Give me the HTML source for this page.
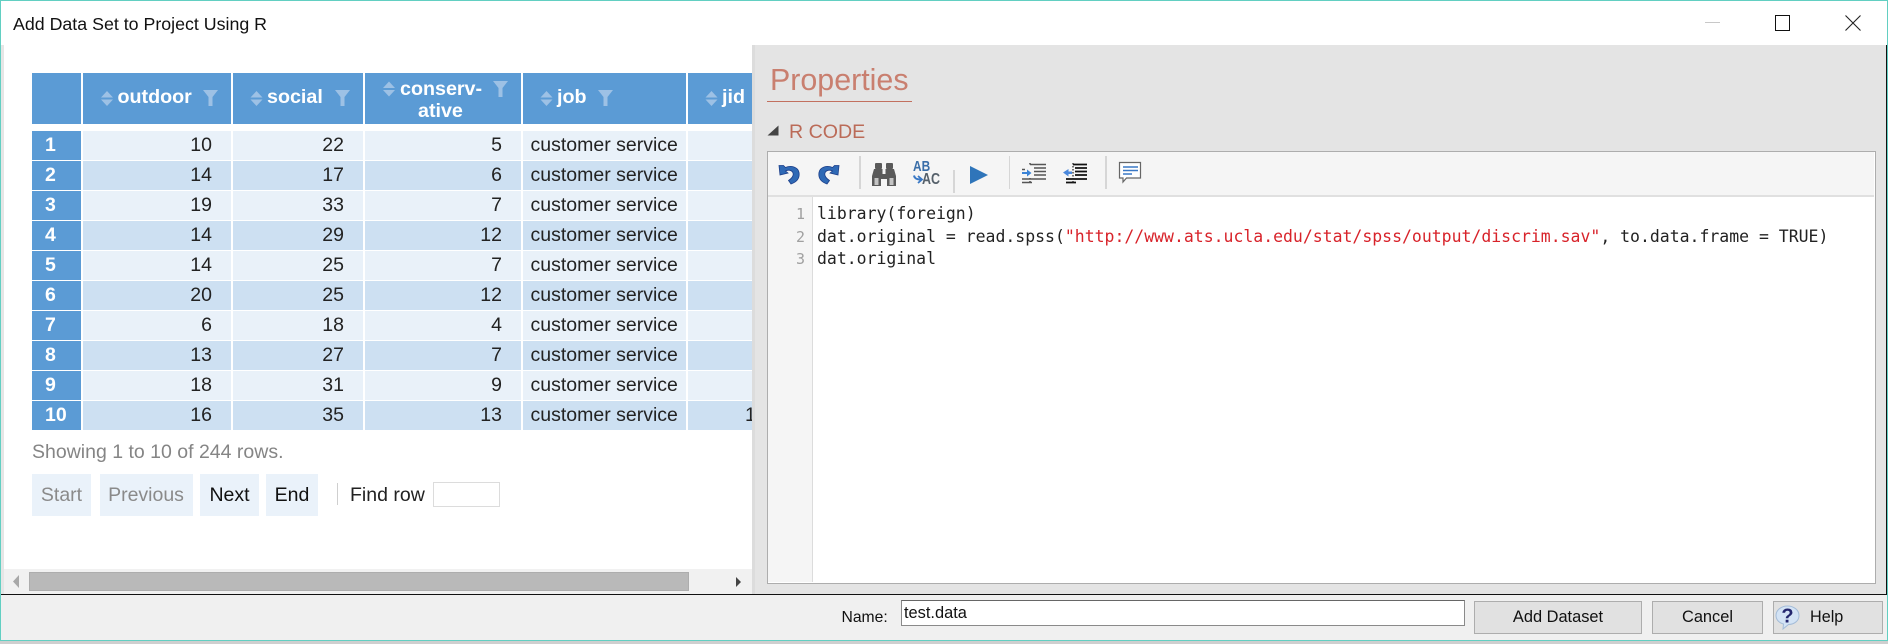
<!DOCTYPE html>
<html><head><meta charset="utf-8"><style>
html,body{margin:0;padding:0;width:1888px;height:644px;overflow:hidden;background:#fff}
body{position:relative;font-family:"Liberation Sans",sans-serif;color:#1a1a1a}
div,span,svg{position:absolute;white-space:nowrap}
.hb{background:#5b9bd5;top:73px;height:51px}
.ht{color:#fff;font-weight:bold;font-size:19.7px;line-height:24px;height:24px}
.c{height:28.5px}
.n{font-size:19.5px;line-height:29px;height:29px;color:#222}
.r{text-align:right}
.i{font-weight:bold;color:#fff;font-size:19.5px;line-height:29px;height:29px}
.btn{background:#eaf2fa;top:474px;height:42px;font-size:19.5px;line-height:42px;text-align:center;color:#111}
.g{color:#8a8a8a}
.code{font-family:"DejaVu Sans Mono","Liberation Mono",monospace;font-size:16.48px;line-height:22px;left:817px;color:#222}
.ln{font-family:"DejaVu Sans Mono","Liberation Mono",monospace;font-size:15px;line-height:22px;left:790px;width:15px;text-align:right;color:#a0a0a0}
.w{background:#e1e1e1;border:1.5px solid #adadad;box-sizing:border-box;top:601px;height:33px;text-align:center;font-size:16.4px;line-height:30px;color:#111}
.sep{background:#d6d6d6;width:1.5px}
</style></head><body>

<!-- bottom strip -->
<div style="left:0;top:641px;width:1888px;height:3px;background:#cfcfcf"></div>

<!-- window frame -->
<div style="left:0;top:0;width:1888px;height:1px;background:#62cfc2"></div>
<div style="left:0;top:0;width:1px;height:641px;background:#62cfc2"></div>
<div style="left:0;top:640px;width:1888px;height:1px;background:#62cfc2"></div>
<div style="left:1887px;top:0;width:1px;height:641px;background:#62cfc2"></div>

<!-- title bar -->
<div style="left:13px;top:12px;font-size:17.8px;line-height:24px;color:#111">Add Data Set to Project Using R</div>
<div style="left:1705px;top:22px;width:15px;height:1px;background:#c8c8c8"></div>
<div style="left:1775px;top:15px;width:12.5px;height:13.5px;border:1.3px solid #111"></div>
<svg style="left:1844px;top:14px" width="18" height="18" viewBox="0 0 18 18"><path d="M1.5 1.5L16.500 16.500M16.500 1.500L1.500 16.500" stroke="#222" stroke-width="1.100" fill="none"/></svg>

<!-- left stripe + panels -->
<div style="left:1px;top:45px;width:3px;height:549px;background:#e6e6e6"></div>
<div style="left:752px;top:45px;width:1134px;height:549px;background:#e4e4e4"></div>
<div style="left:752px;top:45px;width:3px;height:549px;background:#dcdcdc"></div>

<!-- table header -->
<div class="hb" style="left:32px;width:49px"></div>
<div class="hb" style="left:83px;width:148px"></div>
<div class="hb" style="left:233px;width:130px"></div>
<div class="hb" style="left:365px;width:156px"></div>
<div class="hb" style="left:523px;width:163px"></div>
<div class="hb" style="left:688px;width:64px"></div>

<svg style="left:32px;top:73px" width="720" height="51" viewBox="32 73 720 51">
<g fill="#9dc1e5">
<path d="M107 91l6 6.500h-12zM107 106l6-6.500h-12z"/>
<path d="M256.500 91l6 6.500h-12zM256.500 106l6-6.500h-12z"/>
<path d="M389 81.500l6 6.500h-12zM389 96.500l6-6.500h-12z"/>
<path d="M546.500 91l6 6.500h-12zM546.500 106l6-6.500h-12z"/>
<path d="M711.500 91l6 6.500h-12zM711.500 106l6-6.500h-12z"/>
<path d="M203 90h15l-5.500 7v9h-4v-9z"/>
<path d="M335 90h15l-5.500 7v9h-4v-9z"/>
<path d="M493 81h15l-5.500 7v9h-4v-9z"/>
<path d="M598 90h15l-5.500 7v9h-4v-9z"/>
</g></svg>
<div class="ht" style="left:117.500px;top:85px">outdoor</div>
<div class="ht" style="left:267px;top:85px">social</div>
<div class="ht" style="left:400px;top:77px">conserv-</div>
<div class="ht" style="left:418px;top:99px">ative</div>
<div class="ht" style="left:557px;top:85px">job</div>
<div class="ht" style="left:722px;top:85px">jid</div>

<!-- rows -->
<div class="c" style="left:32px;top:131px;width:49px;background:#5b9bd5"></div><div class="c" style="left:83px;top:131px;width:148px;background:#e9f1f9"></div><div class="c" style="left:233px;top:131px;width:130px;background:#e9f1f9"></div><div class="c" style="left:365px;top:131px;width:156px;background:#e9f1f9"></div><div class="c" style="left:523px;top:131px;width:163px;background:#e9f1f9"></div><div class="c" style="left:688px;top:131px;width:64px;background:#e9f1f9"></div>
<div class="i" style="left:45px;top:131px">1</div><div class="n r" style="left:100px;width:112px;top:131px">10</div><div class="n r" style="left:240px;width:104px;top:131px">22</div><div class="n r" style="left:400px;width:102px;top:131px">5</div><div class="n" style="left:530.500px;top:131px">customer service</div>

<div class="c" style="left:32px;top:161px;width:49px;background:#5b9bd5"></div><div class="c" style="left:83px;top:161px;width:148px;background:#cde0f2"></div><div class="c" style="left:233px;top:161px;width:130px;background:#cde0f2"></div><div class="c" style="left:365px;top:161px;width:156px;background:#cde0f2"></div><div class="c" style="left:523px;top:161px;width:163px;background:#cde0f2"></div><div class="c" style="left:688px;top:161px;width:64px;background:#cde0f2"></div>
<div class="i" style="left:45px;top:161px">2</div><div class="n r" style="left:100px;width:112px;top:161px">14</div><div class="n r" style="left:240px;width:104px;top:161px">17</div><div class="n r" style="left:400px;width:102px;top:161px">6</div><div class="n" style="left:530.500px;top:161px">customer service</div>

<div class="c" style="left:32px;top:191px;width:49px;background:#5b9bd5"></div><div class="c" style="left:83px;top:191px;width:148px;background:#e9f1f9"></div><div class="c" style="left:233px;top:191px;width:130px;background:#e9f1f9"></div><div class="c" style="left:365px;top:191px;width:156px;background:#e9f1f9"></div><div class="c" style="left:523px;top:191px;width:163px;background:#e9f1f9"></div><div class="c" style="left:688px;top:191px;width:64px;background:#e9f1f9"></div>
<div class="i" style="left:45px;top:191px">3</div><div class="n r" style="left:100px;width:112px;top:191px">19</div><div class="n r" style="left:240px;width:104px;top:191px">33</div><div class="n r" style="left:400px;width:102px;top:191px">7</div><div class="n" style="left:530.500px;top:191px">customer service</div>

<div class="c" style="left:32px;top:221px;width:49px;background:#5b9bd5"></div><div class="c" style="left:83px;top:221px;width:148px;background:#cde0f2"></div><div class="c" style="left:233px;top:221px;width:130px;background:#cde0f2"></div><div class="c" style="left:365px;top:221px;width:156px;background:#cde0f2"></div><div class="c" style="left:523px;top:221px;width:163px;background:#cde0f2"></div><div class="c" style="left:688px;top:221px;width:64px;background:#cde0f2"></div>
<div class="i" style="left:45px;top:221px">4</div><div class="n r" style="left:100px;width:112px;top:221px">14</div><div class="n r" style="left:240px;width:104px;top:221px">29</div><div class="n r" style="left:400px;width:102px;top:221px">12</div><div class="n" style="left:530.500px;top:221px">customer service</div>

<div class="c" style="left:32px;top:251px;width:49px;background:#5b9bd5"></div><div class="c" style="left:83px;top:251px;width:148px;background:#e9f1f9"></div><div class="c" style="left:233px;top:251px;width:130px;background:#e9f1f9"></div><div class="c" style="left:365px;top:251px;width:156px;background:#e9f1f9"></div><div class="c" style="left:523px;top:251px;width:163px;background:#e9f1f9"></div><div class="c" style="left:688px;top:251px;width:64px;background:#e9f1f9"></div>
<div class="i" style="left:45px;top:251px">5</div><div class="n r" style="left:100px;width:112px;top:251px">14</div><div class="n r" style="left:240px;width:104px;top:251px">25</div><div class="n r" style="left:400px;width:102px;top:251px">7</div><div class="n" style="left:530.500px;top:251px">customer service</div>

<div class="c" style="left:32px;top:281px;width:49px;background:#5b9bd5"></div><div class="c" style="left:83px;top:281px;width:148px;background:#cde0f2"></div><div class="c" style="left:233px;top:281px;width:130px;background:#cde0f2"></div><div class="c" style="left:365px;top:281px;width:156px;background:#cde0f2"></div><div class="c" style="left:523px;top:281px;width:163px;background:#cde0f2"></div><div class="c" style="left:688px;top:281px;width:64px;background:#cde0f2"></div>
<div class="i" style="left:45px;top:281px">6</div><div class="n r" style="left:100px;width:112px;top:281px">20</div><div class="n r" style="left:240px;width:104px;top:281px">25</div><div class="n r" style="left:400px;width:102px;top:281px">12</div><div class="n" style="left:530.500px;top:281px">customer service</div>

<div class="c" style="left:32px;top:311px;width:49px;background:#5b9bd5"></div><div class="c" style="left:83px;top:311px;width:148px;background:#e9f1f9"></div><div class="c" style="left:233px;top:311px;width:130px;background:#e9f1f9"></div><div class="c" style="left:365px;top:311px;width:156px;background:#e9f1f9"></div><div class="c" style="left:523px;top:311px;width:163px;background:#e9f1f9"></div><div class="c" style="left:688px;top:311px;width:64px;background:#e9f1f9"></div>
<div class="i" style="left:45px;top:311px">7</div><div class="n r" style="left:100px;width:112px;top:311px">6</div><div class="n r" style="left:240px;width:104px;top:311px">18</div><div class="n r" style="left:400px;width:102px;top:311px">4</div><div class="n" style="left:530.500px;top:311px">customer service</div>

<div class="c" style="left:32px;top:341px;width:49px;background:#5b9bd5"></div><div class="c" style="left:83px;top:341px;width:148px;background:#cde0f2"></div><div class="c" style="left:233px;top:341px;width:130px;background:#cde0f2"></div><div class="c" style="left:365px;top:341px;width:156px;background:#cde0f2"></div><div class="c" style="left:523px;top:341px;width:163px;background:#cde0f2"></div><div class="c" style="left:688px;top:341px;width:64px;background:#cde0f2"></div>
<div class="i" style="left:45px;top:341px">8</div><div class="n r" style="left:100px;width:112px;top:341px">13</div><div class="n r" style="left:240px;width:104px;top:341px">27</div><div class="n r" style="left:400px;width:102px;top:341px">7</div><div class="n" style="left:530.500px;top:341px">customer service</div>

<div class="c" style="left:32px;top:371px;width:49px;background:#5b9bd5"></div><div class="c" style="left:83px;top:371px;width:148px;background:#e9f1f9"></div><div class="c" style="left:233px;top:371px;width:130px;background:#e9f1f9"></div><div class="c" style="left:365px;top:371px;width:156px;background:#e9f1f9"></div><div class="c" style="left:523px;top:371px;width:163px;background:#e9f1f9"></div><div class="c" style="left:688px;top:371px;width:64px;background:#e9f1f9"></div>
<div class="i" style="left:45px;top:371px">9</div><div class="n r" style="left:100px;width:112px;top:371px">18</div><div class="n r" style="left:240px;width:104px;top:371px">31</div><div class="n r" style="left:400px;width:102px;top:371px">9</div><div class="n" style="left:530.500px;top:371px">customer service</div>

<div class="c" style="left:32px;top:401px;width:49px;background:#5b9bd5"></div><div class="c" style="left:83px;top:401px;width:148px;background:#cde0f2"></div><div class="c" style="left:233px;top:401px;width:130px;background:#cde0f2"></div><div class="c" style="left:365px;top:401px;width:156px;background:#cde0f2"></div><div class="c" style="left:523px;top:401px;width:163px;background:#cde0f2"></div><div class="c" style="left:688px;top:401px;width:64px;background:#cde0f2"></div>
<div class="i" style="left:45px;top:401px">10</div><div class="n r" style="left:100px;width:112px;top:401px">16</div><div class="n r" style="left:240px;width:104px;top:401px">35</div><div class="n r" style="left:400px;width:102px;top:401px">13</div><div class="n" style="left:530.500px;top:401px">customer service</div>
<div style="left:688px;top:401px;width:64px;height:29px;overflow:hidden"><div class="n" style="left:57px;top:0">1</div></div>

<!-- pagination -->
<div style="left:32px;top:441px;font-size:19.5px;line-height:23px;color:#858585">Showing 1 to 10 of 244 rows.</div>
<div class="btn g" style="left:32px;width:59px">Start</div>
<div class="btn g" style="left:99.500px;width:93px">Previous</div>
<div class="btn" style="left:200px;width:59px">Next</div>
<div class="btn" style="left:266px;width:52px">End</div>
<div style="left:336.500px;top:483px;width:1px;height:22px;background:#cfcfcf"></div>
<div style="left:350px;top:483px;font-size:19.5px;line-height:24px;color:#222">Find row</div>
<div style="left:432.500px;top:482px;width:67px;height:25px;box-sizing:border-box;border:1.5px solid #dcdcdc;background:#fff"></div>

<!-- scrollbar -->
<div style="left:4px;top:569px;width:748px;height:25px;background:#f1f1f1"></div>
<div style="left:29px;top:572px;width:660px;height:19px;box-sizing:border-box;background:#b9b9b9;border:1px solid #adadad"></div>
<svg style="left:12px;top:574px" width="8" height="15"><path d="M7 1L1 7.500L7 14z" fill="#a8a8a8"/></svg>
<svg style="left:734px;top:576px" width="8" height="12"><path d="M2 1L7 6L2 11z" fill="#444"/></svg>

<!-- properties -->
<div style="left:770px;top:62px;font-size:30.400px;line-height:36px;color:#c97f6f">Properties</div>
<div style="left:767px;top:100.500px;width:145px;height:1.300px;background:#c2705f"></div>
<svg style="left:767px;top:125px" width="12" height="11"><path d="M11.500 0.500V10.500H0.500z" fill="#444"/></svg>
<div style="left:789px;top:120px;font-size:19.600px;line-height:24px;color:#bb6b58">R CODE</div>

<!-- editor -->
<div style="left:766.500px;top:150.500px;width:1109px;height:433px;box-sizing:border-box;border:1.500px solid #adadad;background:#fff"></div>
<div style="left:768px;top:152px;width:1106px;height:43px;background:#f5f5f5"></div>
<div style="left:768px;top:194.500px;width:1106px;height:2px;background:#e0e0e0"></div>
<div style="left:768px;top:196.500px;width:43.500px;height:385.500px;background:#f5f5f5"></div>
<div style="left:811.500px;top:196.500px;width:1px;height:385.500px;background:#dcdcdc"></div>

<!-- toolbar icons -->
<div class="sep" style="left:859px;top:156px;height:33px"></div>
<div class="sep" style="left:953px;top:170px;height:23px"></div>
<div class="sep" style="left:1008.500px;top:156px;height:33px"></div>
<div class="sep" style="left:1105px;top:156px;height:33px"></div>

<svg style="left:778px;top:163px" width="22" height="22" viewBox="0 0 22 22"><path d="M1 2.500L2 12L10 10L7.500 8C10 6.500 14 7 15 10C16 13 13.500 15.500 10.500 17.500L13 21C18.500 19 22 15.500 21 9.500C20 4 13 2 7.500 4.500L5.500 2.500z" fill="#2f69b5" stroke="#1d3f8a" stroke-width=".8"/></svg>
<svg style="left:818px;top:163px" width="22" height="22" viewBox="0 0 22 22"><path d="M21 2.500L20 12L12 10L14.500 8C12 6.500 8 7 7 10C6 13 8.500 15.500 11.500 17.500L9 21C3.500 19 0 15.500 1 9.500C2 4 9 2 14.500 4.500L16.500 2.500z" fill="#2f69b5" stroke="#1d3f8a" stroke-width=".8"/></svg>

<svg style="left:871px;top:162px" width="26" height="25" viewBox="0 0 26 25"><g fill="#5a5a5a"><rect x="4" y="1" width="7" height="6" rx="1"/><rect x="15" y="1" width="7" height="6" rx="1"/><path d="M3 7h8.500v5H14.500V7H23l2 7v10H16V17H10V24H1V14z"/></g><rect x="3.500" y="16" width="4" height="7" fill="#c4c4c4"/><rect x="18.500" y="16" width="4" height="7" fill="#c4c4c4"/></svg>

<svg style="left:912px;top:161px" width="27" height="26" viewBox="0 0 27 26"><path d="M2 14.500C2.500 17 4 18.500 9 18.500" stroke="#3a78c5" stroke-width="2" fill="none"/><path d="M6 15L10 18.500L6 22" stroke="#3a78c5" stroke-width="1.800" fill="none"/></svg>
<div style="left:913px;top:160px;font-size:14.500px;line-height:15px;font-weight:bold;color:#3a6ea8;transform:scaleX(.82);transform-origin:0 0">AB</div>
<div style="left:922px;top:172px;font-size:16px;line-height:16px;font-weight:bold;color:#55606a;transform:scaleX(.78);transform-origin:0 0">AC</div>

<svg style="left:969px;top:165px" width="20" height="20" viewBox="0 0 20 20"><path d="M1 1L19 10L1 19z" fill="#2f75ba"/></svg>

<svg style="left:1022px;top:162px" width="25" height="23" viewBox="0 0 25 23"><g stroke="#555" stroke-width="1.600"><path d="M8 2.500h16M12 6h12M12 9.500h12M12 13h12M0 17h24M0 20.500h10"/><path d="M8 1v2M8 16v6" stroke-dasharray="1.500 1.500"/></g><path d="M0 7.500h3" stroke="#555" stroke-width="1.500"/><path d="M0 10h5V7.500L9.500 11L5 14.500V12H0z" fill="#3a83d6"/></svg>
<svg style="left:1063px;top:162px" width="25" height="23" viewBox="0 0 25 23"><g stroke="#111" stroke-width="1.800"><path d="M10 2.500h14M12 6h12M12 9.500h12M12 13h12M3 17h21M3 20.500h10"/></g><path d="M10 1v21" stroke="#222" stroke-width="1.200" stroke-dasharray="1.500 1.500"/><path d="M9.500 8V10.500H13V13H9.500V15.500L4 11.500z" fill="#4a88dc" transform="translate(-4 -1)"/></svg>

<svg style="left:1118px;top:161px" width="24" height="24" viewBox="0 0 24 24"><path d="M2 1.500H22.500V17H8.500L5 21V17H1.500V1.500z" fill="#fff" stroke="#666" stroke-width="1.200"/><path d="M5 6h15M5 9.500h15M5 13h9" stroke="#3a78c5" stroke-width="1.400"/></svg>

<!-- code -->
<div class="ln" style="top:203px">1</div><div class="ln" style="top:225.500px">2</div><div class="ln" style="top:248px">3</div>
<div class="code" style="top:203px">library(foreign)</div>
<div class="code" style="top:225.500px">dat.original = read.spss(<span style="position:static;color:#d8232a">"http://www.ats.ucla.edu/stat/spss/output/discrim.sav"</span>, to.data.frame = TRUE)</div>
<div class="code" style="top:248px">dat.original</div>

<!-- black frame lines -->
<div style="left:1px;top:594px;width:1886px;height:1.300px;background:#111"></div>
<div style="left:1886px;top:45px;width:1px;height:550px;background:#111"></div>

<!-- footer -->
<div style="left:1px;top:595.300px;width:1886px;height:44.700px;background:#f0f0f0"></div>
<div style="left:841.500px;top:608px;font-size:15.700px;line-height:20px;color:#111">Name:</div>
<div style="left:901px;top:600px;width:564px;height:26px;box-sizing:border-box;background:#fff;border:1px solid #8a8a8a;border-top-color:#666"></div>
<div style="left:904px;top:602.500px;font-size:16.400px;line-height:20px;color:#111">test.data</div>
<div class="w" style="left:1474px;width:168px">Add Dataset</div>
<div class="w" style="left:1652px;width:111px">Cancel</div>
<div class="w" style="left:1772.500px;width:110px"></div>
<div style="left:1810px;top:607px;font-size:16.200px;line-height:20px;color:#111">Help</div>
<svg style="left:1775px;top:605px" width="25" height="25" viewBox="0 0 25 25"><path d="M12.500 1C18.800 1 24 5 24 10.500C24 16 19 19.500 13.500 19.500L8 24L8.500 19C4 18 1 14.500 1 10.500C1 5 6.200 1 12.500 1z" fill="#d3e3f5" stroke="#a4bcd8" stroke-width="1"/><text x="12.500" y="17.500" font-family="Liberation Sans,sans-serif" font-size="20" font-weight="bold" text-anchor="middle" fill="#23266e">?</text></svg>

</body></html>
